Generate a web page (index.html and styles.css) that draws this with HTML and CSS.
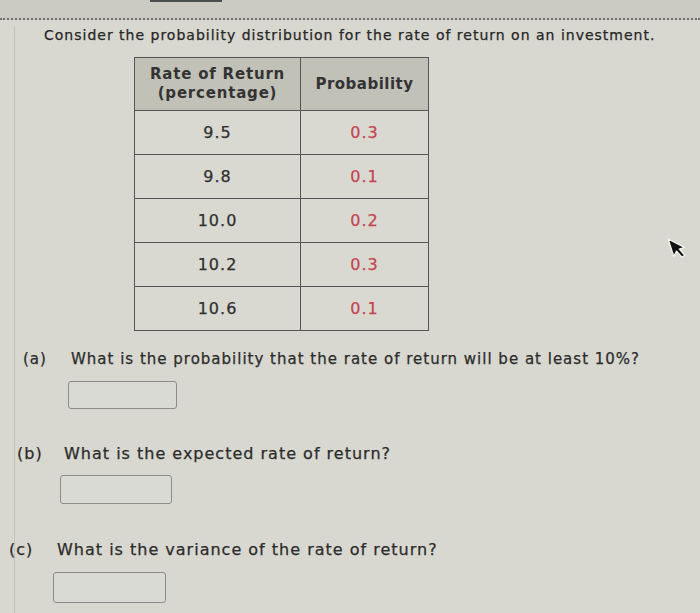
FILE: index.html
```html
<!DOCTYPE html>
<html lang="en">
<head>
<meta charset="utf-8">
<title>Probability distribution</title>
<link rel="stylesheet" href="styles.css">
</head>
<body>
<div class="page">
  <div class="topbar"><span class="topmark"></span></div>
  <div class="content">
    <p class="title">Consider the probability distribution for the rate of return on an investment.</p>
    <table class="dist">
      <thead>
        <tr><th class="c1">Rate of Return<br>(percentage)</th><th class="c2">Probability</th></tr>
      </thead>
      <tbody>
        <tr><td>9.5</td><td class="prob">0.3</td></tr>
        <tr><td>9.8</td><td class="prob">0.1</td></tr>
        <tr><td>10.0</td><td class="prob">0.2</td></tr>
        <tr><td>10.2</td><td class="prob">0.3</td></tr>
        <tr><td>10.6</td><td class="prob">0.1</td></tr>
      </tbody>
    </table>

    <div class="q qa">
      <div class="qline"><span class="lbl">(a)</span><span class="qtext">What is the probability that the rate of return will be at least 10%?</span></div>
      <div class="answer ans-a"></div>
    </div>
    <div class="q qb">
      <div class="qline"><span class="lbl">(b)</span><span class="qtext">What is the expected rate of return?</span></div>
      <div class="answer ans-b"></div>
    </div>
    <div class="q qc">
      <div class="qline"><span class="lbl">(c)</span><span class="qtext">What is the variance of the rate of return?</span></div>
      <div class="answer ans-c"></div>
    </div>
  </div>
  <svg class="cursor" width="18" height="26" viewBox="0 0 16 24" aria-hidden="true">
    <path d="M1 1 L1 18 L5 14 L8 21 L11 20 L8 13 L13 13 Z" fill="#111" stroke="#f4f4f0" stroke-width="1.2" stroke-linejoin="round"/>
  </svg>
</div>
</body>
</html>
```

FILE: styles.css
```css
html, body {
  margin: 0;
  padding: 0;
}
body {
  background: #d8d8d0;
  font-family: "DejaVu Sans", Verdana, sans-serif;
  color: #2b2b2b;
  -webkit-text-stroke: 0.25px currentColor;
}
.page {
  position: relative;
  width: 700px;
  height: 613px;
  overflow: hidden;
}
.topbar {
  position: relative;
  height: 18px;
  background: #cbcbc3;
  border-bottom: 2px dotted #707070;
}
.topmark {
  position: absolute;
  left: 150px;
  top: 0;
  width: 72px;
  height: 2px;
  background: #4a4e4e;
}
.content {
  border-left: 1px solid #c4c4bc;
  margin-left: 14px;
  padding-bottom: 10px;
}
.title {
  margin: 6px 0 0 29px;
  font-size: 14px;
  line-height: 18px;
  letter-spacing: 1px;
  color: #262626;
}
.dist {
  margin: 13px 0 0 119px;
  border-collapse: collapse;
  border: 1px solid #4a4a4a;
}
.dist th, .dist td {
  border: 1px solid #555;
  text-align: center;
  padding: 0;
}
.dist th {
  background: #c1c1b8;
  font-weight: bold;
  font-size: 15px;
  line-height: 19px;
  height: 52px;
  color: #333;
  -webkit-text-stroke: 0;
}
.dist th.c1 { width: 165px; letter-spacing: 0.8px; }
.dist th.c2 { width: 127px; letter-spacing: 0.5px; }
.dist td {
  background: #d9d9d2;
  height: 43px;
  font-size: 16px;
  color: #2e2e2e;
  letter-spacing: 1px;
}
.dist td.prob {
  color: #c44450;
}
.q {
  display: flex;
  flex-direction: column;
  letter-spacing: 1px;
}
.qline {
  display: flex;
  align-items: center;
  line-height: 20px;
}
.lbl {
  width: 48px;
  flex: none;
}
.answer {
  border: 1px solid #8c8c88;
  border-radius: 3px;
  background: #dadad4;
  box-sizing: border-box;
}
.qa { margin: 18px 0 0 8px; font-size: 15px; }
.qa .answer { margin: 12px 0 0 45px; width: 109px; height: 28px; }
.qb { margin: 35px 0 0 2px; font-size: 16px; }
.qb .lbl { width: 47px; }
.qb .answer { margin: 11px 0 0 43px; width: 112px; height: 29px; }
.qc { margin: 36px 0 0 -6px; font-size: 16px; }
.qc .answer { margin: 12px 0 0 44px; width: 113px; height: 31px; }
.cursor {
  position: absolute;
  left: 670px;
  top: 235px;
  transform: rotate(-18deg);
}
```
